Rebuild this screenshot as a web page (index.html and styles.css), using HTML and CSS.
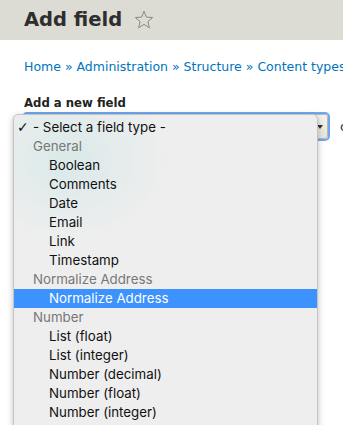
FILE: index.html
```html
<!DOCTYPE html>
<html>
<head>
<meta charset="utf-8">
<link rel="stylesheet" href="styles.css">
</head>
<body>
<div class="page">
  <header class="header">
    <h1 class="title">Add field</h1>
    <svg class="star" width="20" height="20" viewBox="0 0 20 20"><path d="M10 1.2 L12.4 7.1 L18.7 7.5 L13.9 11.6 L15.4 17.8 L10 14.4 L4.6 17.8 L6.1 11.6 L1.3 7.5 L7.6 7.1 Z" fill="none" stroke="#8b8a80" stroke-width="1" stroke-linejoin="round"/></svg>
  </header>
  <nav class="crumbs">
    <a>Home</a> » <a>Administration</a> » <a>Structure</a> » <a>Content types</a>
  </nav>
  <div class="label">Add a new field</div>
  <div class="formrow">
    <div class="select"><span class="arrow"></span></div>
    <span class="or">or</span>
  </div>
  <div class="menu">
    <div class="row checked"><span class="check">✓</span>- Select a field type -</div>
    <div class="row group">General</div>
    <div class="row item">Boolean</div>
    <div class="row item">Comments</div>
    <div class="row item">Date</div>
    <div class="row item">Email</div>
    <div class="row item">Link</div>
    <div class="row item">Timestamp</div>
    <div class="row group">Normalize Address</div>
    <div class="row item selected">Normalize Address</div>
    <div class="row group">Number</div>
    <div class="row item">List (float)</div>
    <div class="row item">List (integer)</div>
    <div class="row item">Number (decimal)</div>
    <div class="row item">Number (float)</div>
    <div class="row item">Number (integer)</div>
  </div>
</div>
</body>
</html>
```
FILE: styles.css
```css
html, body {
  margin: 0;
  padding: 0;
  background: #ffffff;
}
.page {
  position: relative;
  width: 343px;
  height: 425px;
  overflow: hidden;
  font-family: "DejaVu Sans", sans-serif;
  color: #333333;
}
.header {
  height: 40px;
  background: #dcdbd4;
  display: flex;
  align-items: center;
  padding-left: 24px;
  gap: 12px;
}
.title {
  margin: 0;
  font-size: 19.5px;
  font-weight: bold;
  color: #2e2e2e;
  line-height: 40px;
}
.star {
  display: block;
  margin-top: -1px;
}
.crumbs {
  margin: 18px 0 0 24px;
  font-size: 12.5px;
  line-height: 18px;
  white-space: nowrap;
  color: #0074bd;
}
.crumbs a {
  color: #0074bd;
}
.label {
  margin: 20px 0 0 24px;
  font-size: 11.7px;
  font-weight: bold;
  line-height: 14px;
  color: #222222;
}
.formrow {
  display: flex;
  align-items: center;
  gap: 12px;
  margin: 4px 0 0 24px;
}
.select {
  position: relative;
  width: 302px;
  height: 23px;
  flex: none;
  border: 1px solid #b8b8b0;
  border-radius: 3px;
  background: linear-gradient(#f4f4ef, #e4e3dc);
  box-shadow: 0 0 0 2px #6ea6f0;
}
.arrow {
  position: absolute;
  right: 4px;
  top: 10px;
  width: 0;
  height: 0;
  border-left: 3px solid transparent;
  border-right: 3px solid transparent;
  border-top: 4px solid #333333;
}
.or {
  font-size: 13px;
  color: #333333;
  white-space: nowrap;
}
.menu {
  position: absolute;
  left: 13px;
  top: 114px;
  width: 303px;
  height: 330px;
  padding-top: 3px;
  border: 1px solid #c4c4c4;
  border-radius: 5px 5px 0 0;
  background:
    radial-gradient(ellipse 100px 80px at 55px 45px, rgba(205, 230, 230, 0.6), rgba(238, 238, 238, 0) 100%),
    #eeeeee;
  box-shadow: 0 2px 6px rgba(0, 0, 0, 0.25);
  font-family: Inter, "Noto Sans", sans-serif;
  font-size: 13.3px;
}
.row {
  height: 19px;
  line-height: 19px;
  color: #111111;
  white-space: nowrap;
}
.checked {
  padding-left: 19px;
  position: relative;
}
.check {
  position: absolute;
  left: 3px;
  top: 0;
  font-size: 14px;
  font-weight: bold;
  font-family: "DejaVu Sans", sans-serif;
}
.group {
  padding-left: 19px;
  color: #777777;
}
.item {
  padding-left: 35px;
}
.selected {
  background: #3d92fe;
  color: #ffffff;
}
```
